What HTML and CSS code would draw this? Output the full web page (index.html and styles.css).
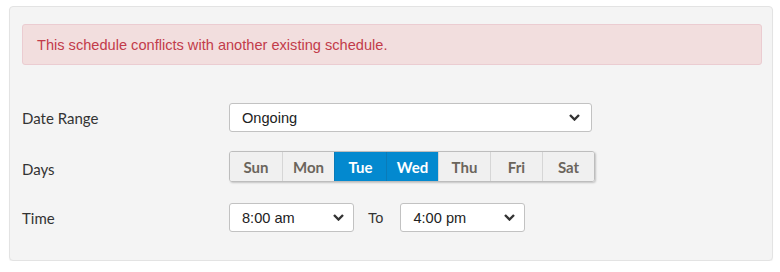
FILE: index.html
```html
<!DOCTYPE html>
<html lang="en">
<head>
    <meta charset="UTF-8">
    <title>Schedule</title>
    <link rel="stylesheet" href="styles.css">
</head>
<body>
    <div class="panel">
        <div class="alert">This schedule conflicts with another existing schedule.</div>

        <div class="form-row">
            <label class="row-label">Date Range</label>
            <div class="select select-wide">
                <span>Ongoing</span>
                <svg class="chevron" width="11" height="7" viewBox="0 0 11 7"><polyline points="1,1 5.5,5.5 10,1" fill="none" stroke="#333" stroke-width="2.4"/></svg>
            </div>
        </div>

        <div class="form-row days-row">
            <label class="row-label">Days</label>
            <div class="day-group">
                <button class="day">Sun</button>
                <button class="day">Mon</button>
                <button class="day active">Tue</button>
                <button class="day active">Wed</button>
                <button class="day">Thu</button>
                <button class="day">Fri</button>
                <button class="day">Sat</button>
            </div>
        </div>

        <div class="form-row">
            <label class="row-label">Time</label>
            <div class="select select-time">
                <span>8:00 am</span>
                <svg class="chevron" width="11" height="7" viewBox="0 0 11 7"><polyline points="1,1 5.5,5.5 10,1" fill="none" stroke="#333" stroke-width="2.4"/></svg>
            </div>
            <span class="to">To</span>
            <div class="select select-time">
                <span>4:00 pm</span>
                <svg class="chevron" width="11" height="7" viewBox="0 0 11 7"><polyline points="1,1 5.5,5.5 10,1" fill="none" stroke="#333" stroke-width="2.4"/></svg>
            </div>
        </div>
    </div>
</body>
</html>
```

FILE: styles.css
```css
body {
    margin: 0;
    font-family: "Liberation Sans", Arial, sans-serif;
    font-size: 14px;
    color: #333;
    background: #fff;
}
.panel {
    margin: 6px 0 0 9px;
    width: 764px;
    height: 255px;
    box-sizing: border-box;
    background-color: #f4f4f4;
    border: 1px solid #e3e3e3;
    border-radius: 4px;
    box-shadow: 0 1px 1px rgba(0, 0, 0, 0.05);
    padding: 17px 10px 0 12px;
}
.alert {
    background-color: #f2dede;
    border: 1px solid #ebccd1;
    border-radius: 3px;
    color: #c23b4a;
    font-size: 14.6px;
    height: 41px;
    box-sizing: border-box;
    padding: 0 14px;
    display: flex;
    align-items: center;
    margin-bottom: 38px;
}
.form-row {
    display: flex;
    align-items: center;
    margin-bottom: 19px;
}
.form-row:last-child {
    margin-bottom: 0;
}
.days-row {
    margin-bottom: 21px;
}
.days-row .row-label {
    padding-top: 5px;
}
.row-label {
    width: 207px;
    font-family: Lato, sans-serif;
    font-size: 15px;
    color: #333;
}
.select {
    height: 29px;
    box-sizing: border-box;
    background: #fff;
    border: 1px solid #c2c2c2;
    border-radius: 3px;
    display: flex;
    align-items: center;
    justify-content: space-between;
    padding: 0 11px 0 12px;
    font-size: 14.6px;
    color: #222;
}
.select-wide {
    width: 363px;
}
.select-time {
    width: 125px;
    padding-right: 9px;
}
.chevron {
    display: block;
}
.to {
    margin: 0 17px 0 14px;
    font-size: 14.6px;
    color: #333;
}
.day-group {
    display: flex;
    border: 1px solid #bdbdbd;
    border-radius: 3px;
    box-shadow: 1px 1px 2px rgba(0, 0, 0, 0.2);
    overflow: hidden;
}
.day {
    width: 52px;
    height: 29px;
    margin: 0;
    border: none;
    border-left: 1px solid #d6d6d6;
    background-color: #f0f0f0;
    font-family: Lato, sans-serif;
    font-weight: bold;
    font-size: 15px;
    color: #6b655c;
    padding: 0;
    cursor: pointer;
}
.day:first-child {
    border-left: none;
}
.day.active {
    background-color: #0389cf;
    border-left-color: #0a7bb8;
    color: #fff;
}
```
